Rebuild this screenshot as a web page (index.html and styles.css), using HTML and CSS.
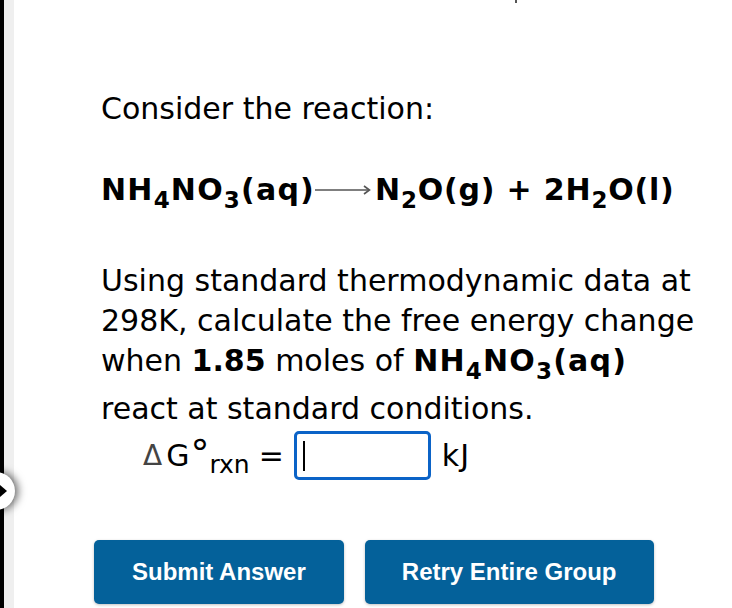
FILE: index.html
```html
<!DOCTYPE html>
<html lang="en">
<head>
<meta charset="utf-8">
<title>Free energy question</title>
<link rel="stylesheet" href="styles.css">
</head>
<body>
<div class="page">
  <div class="rail"><div class="rail-black"></div><div class="rail-gray"></div></div>
  <main class="content">
    <p class="intro">Consider the reaction:</p>
    <p class="equation"><span class="chem">NH<sub>4</sub>NO<sub>3</sub>(aq)</span><svg class="arrow" width="56" height="12" viewBox="0 0 56 12"><line x1="0" y1="6" x2="54" y2="6" stroke="#555" stroke-width="1.6"/><polyline points="49,2 54.5,6 49,10" fill="none" stroke="#555" stroke-width="1.6"/></svg><span class="chem eqn-right">N<sub>2</sub>O(g) + 2H<sub>2</sub>O(l)</span></p>
    <p class="question">Using standard thermodynamic data at<br>298K, calculate the free energy change<br>when <b>1.85</b> moles of <b class="chem">NH<sub>4</sub>NO<sub>3</sub>(aq)</b><span class="last-line">react at standard conditions.</span></p>
    <div class="answer">
      <span class="delta">Δ</span><span class="g">G</span><span class="deg">°</span><span class="rxn">rxn</span>
      <span class="eq">=</span>
      <div class="field"><span class="caret"></span></div>
      <span class="unit">kJ</span>
    </div>
    <div class="buttons">
      <button class="btn">Submit Answer</button>
      <button class="btn">Retry Entire Group</button>
    </div>
  </main>
  <div class="handle"><span class="handle-tri"></span></div>
  <div class="top-mark"></div>
</div>
</body>
</html>
```
FILE: styles.css
```css
html, body {
  margin: 0;
  padding: 0;
  background: #ffffff;
}
.page {
  position: relative;
  display: flex;
  width: 732px;
  height: 608px;
  overflow: hidden;
  font-family: "DejaVu Sans", Verdana, sans-serif;
  color: #000;
}
.rail {
  display: flex;
  flex: none;
}
.rail-black {
  width: 4px;
  background: #000;
}
.rail-gray {
  width: 10px;
  background: #efefef;
}
.content {
  flex: 1;
  padding: 89px 0 0 87px;
  font-size: 30px;
  line-height: 40px;
}
p {
  margin: 0;
}
sub {
  font-size: 23px;
  line-height: 0;
  vertical-align: -8px;
}
.chem {
  letter-spacing: 1.2px;
}
.equation {
  margin-top: 41px;
  font-weight: bold;
  white-space: nowrap;
}
.eqn-right {
  letter-spacing: 0.8px;
}
.arrow {
  vertical-align: 4px;
  margin: 0 4px 0 0;
}
.question {
  margin-top: 51px;
  white-space: nowrap;
}
.last-line {
  display: block;
  margin-top: 8px;
}
.answer {
  display: flex;
  align-items: center;
  margin: 2px 0 0 42px;
  height: 49px;
}
.delta {
  font-size: 28px;
  color: #444;
  margin-right: 4px;
}
.g {
  letter-spacing: 0;
}
.deg {
  font-size: 38px;
  line-height: 0;
  position: relative;
  top: -3px;
  margin-left: 1px;
}
.rxn {
  font-size: 25px;
  position: relative;
  top: 9px;
  margin-left: 0;
}
.eq {
  margin: 0 10px 0 9px;
}
.field {
  box-sizing: border-box;
  width: 137px;
  height: 49px;
  border: 3px solid #0b63c7;
  border-radius: 5px;
  display: flex;
  align-items: center;
  padding-left: 6px;
  flex: none;
}
.caret {
  width: 2px;
  height: 30px;
  background: #000;
}
.unit {
  margin-left: 11px;
  letter-spacing: 1px;
}
.buttons {
  display: flex;
  gap: 21px;
  margin: 60px 0 0 -7px;
}
.btn {
  height: 64px;
  padding: 0 38px;
  border: none;
  border-radius: 5px;
  background: #04619a;
  color: #fff;
  font-family: "Liberation Sans", Arial, sans-serif;
  font-weight: bold;
  font-size: 24px;
  box-shadow: 0 1px 3px rgba(0,0,0,0.25);
}
.btn + .btn {
  padding: 0 37px;
}
.handle {
  position: absolute;
  left: -23px;
  top: 472px;
  width: 38px;
  height: 38px;
  border-radius: 50%;
  background: #fff;
  box-shadow: 3px 0 8px rgba(0,0,0,0.6);
}
.handle-tri {
  position: absolute;
  left: 23px;
  top: 13px;
  width: 0;
  height: 0;
  border-top: 6px solid transparent;
  border-bottom: 6px solid transparent;
  border-left: 7px solid #000;
}
.top-mark {
  position: absolute;
  left: 515px;
  top: 0;
  width: 2px;
  height: 3px;
  background: #555;
}
```
